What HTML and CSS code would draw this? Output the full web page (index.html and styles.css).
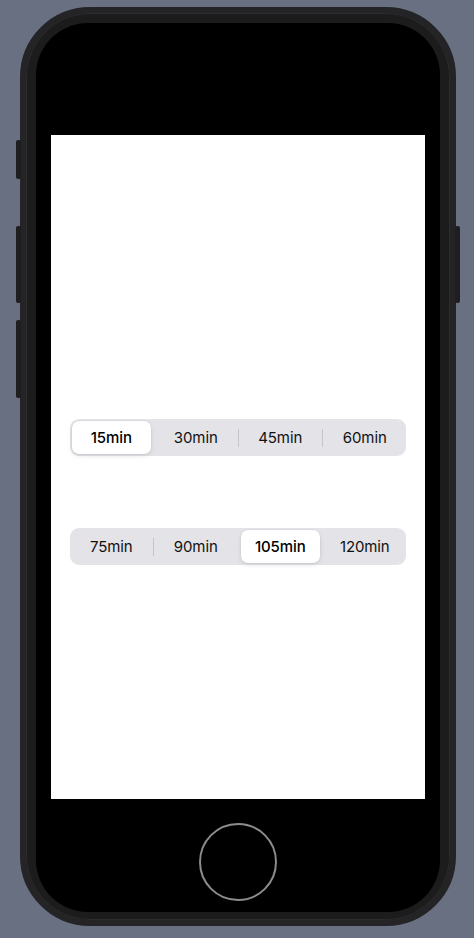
FILE: index.html
```html
<!DOCTYPE html>
<html lang="en">
<head>
<meta charset="utf-8">
<title>Segmented control</title>
<link rel="stylesheet" href="styles.css">
</head>
<body>
<div class="stage">
  <div class="btn-left b1"></div>
  <div class="btn-left b2"></div>
  <div class="btn-left b3"></div>
  <div class="btn-right"></div>
  <div class="phone">
    <div class="bezel">
      <div class="screen">
        <div class="segmented">
          <div class="seg selected">15min</div>
          <div class="sep hidden"></div>
          <div class="seg">30min</div>
          <div class="sep"></div>
          <div class="seg">45min</div>
          <div class="sep"></div>
          <div class="seg">60min</div>
        </div>
        <div class="segmented">
          <div class="seg">75min</div>
          <div class="sep"></div>
          <div class="seg">90min</div>
          <div class="sep hidden"></div>
          <div class="seg selected">105min</div>
          <div class="sep hidden"></div>
          <div class="seg">120min</div>
        </div>
      </div>
      <div class="home"></div>
    </div>
  </div>
</div>
</body>
</html>
```
FILE: styles.css
```css
html, body {
  margin: 0;
  padding: 0;
}
body {
  background: #687081;
  width: 474px;
  height: 938px;
  overflow: hidden;
  font-family: Inter, "Liberation Sans", sans-serif;
}
.stage {
  position: relative;
  width: 474px;
  height: 938px;
  padding-top: 7px;
  box-sizing: border-box;
}
.phone {
  margin-left: 20px;
  width: 436px;
  height: 919px;
  box-sizing: border-box;
  border-radius: 70px;
  background: #1c1c1d;
  border: 6px solid #242426;
  padding: 10px 10px 8px 10px;
  box-shadow: inset 0 0 0 1px #2c2c2e;
}
.bezel {
  width: 404px;
  height: 889px;
  background: #000;
  border-radius: 52px;
  padding-top: 112px;
  box-sizing: border-box;
  display: flex;
  flex-direction: column;
  align-items: center;
}
.screen {
  width: 374px;
  height: 664px;
  background: #fff;
  box-sizing: border-box;
  padding: 284px 19px 0 19px;
  display: flex;
  flex-direction: column;
  gap: 72px;
}
.segmented {
  height: 37px;
  box-sizing: border-box;
  background: #e3e3e8;
  border-radius: 9px;
  padding: 2px;
  display: flex;
  align-items: center;
}
.seg {
  width: 78.5px;
  height: 33px;
  flex: none;
  display: flex;
  align-items: center;
  justify-content: center;
  font-size: 15px;
  color: #111;
  letter-spacing: -0.1px;
}
.seg.selected {
  background: #fff;
  border-radius: 7px;
  box-shadow: 0 2px 5px rgba(0,0,0,0.10), 0 0 0 0.5px rgba(0,0,0,0.05);
  font-weight: 500;
  color: #000;
}
.sep {
  width: 1px;
  height: 18px;
  margin: 0 2.5px;
  background: #c4c4cc;
  flex: none;
}
.sep.hidden {
  visibility: hidden;
}
.home {
  margin-top: 24px;
  width: 78px;
  height: 78px;
  box-sizing: border-box;
  border: 2px solid #8c8c8e;
  border-radius: 50%;
}
.btn-left, .btn-right {
  position: absolute;
  width: 5px;
  background: #1e1e20;
  border-radius: 2px;
}
.btn-left { left: 16px; }
.btn-right { left: 455px; top: 226px; height: 77px; }
.b1 { top: 140px; height: 39px; }
.b2 { top: 226px; height: 77px; }
.b3 { top: 320px; height: 78px; }
```
